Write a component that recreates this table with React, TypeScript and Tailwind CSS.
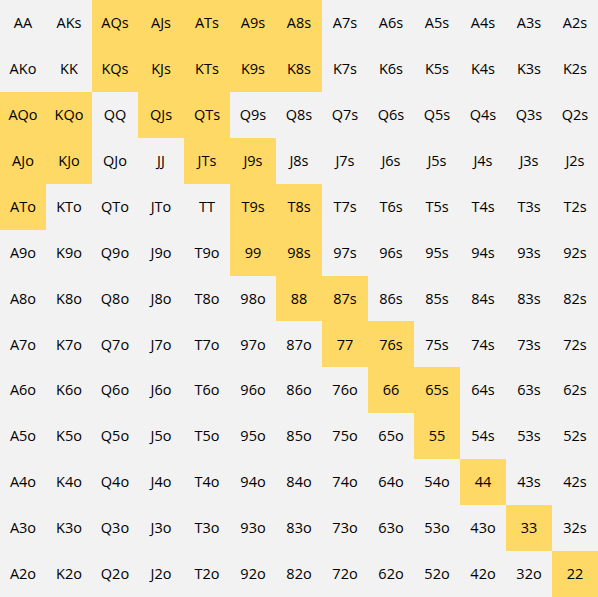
import React from "react";

const ranks = ["A", "K", "Q", "J", "T", "9", "8", "7", "6", "5", "4", "3", "2"];

const highlighted = new Set<string>([
  "AQs", "AJs", "ATs", "A9s", "A8s",
  "KQs", "KJs", "KTs", "K9s", "K8s",
  "AQo", "KQo", "QJs", "QTs",
  "AJo", "KJo", "JTs", "J9s",
  "ATo", "T9s", "T8s",
  "99", "98s",
  "88", "87s",
  "77", "76s",
  "66", "65s",
  "55", "44", "33", "22",
]);

function label(r: number, c: number): string {
  if (r === c) return ranks[r] + ranks[c];
  if (c > r) return ranks[r] + ranks[c] + "s";
  return ranks[c] + ranks[r] + "o";
}

export default function App() {
  const cells: React.ReactNode[] = [];
  for (let r = 0; r < 13; r++) {
    for (let c = 0; c < 13; c++) {
      const l = label(r, c);
      const hi = highlighted.has(l);
      cells.push(
        <div
          key={l}
          className={
            (hi ? "bg-[#ffd966] " : "bg-[#f2f2f2] ") +
            "flex items-center justify-center text-[14.5px] text-black"
          }
        >
          {l}
        </div>
      );
    }
  }
  return (
    <div
      className="w-[598px] h-[597px] grid grid-cols-13 grid-rows-13 bg-[#f2f2f2]"
      style={{ fontFamily: '"Open Sans", "Noto Sans", sans-serif' }}
    >
      {cells}
    </div>
  );
}
